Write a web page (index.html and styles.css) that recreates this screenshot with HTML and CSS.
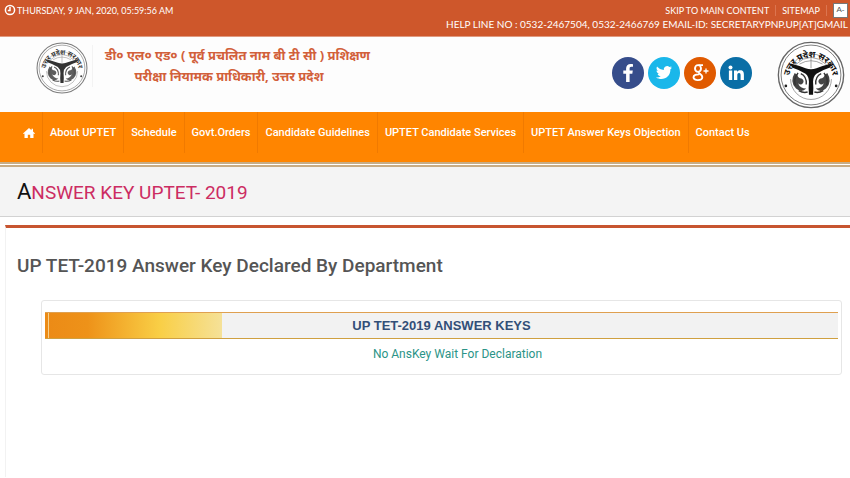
FILE: index.html
```
<!DOCTYPE html>
<html lang="en">
<head>
<meta charset="UTF-8">
<meta name="viewport" content="width=device-width, initial-scale=1.0">
<title>UPTET Answer Key</title>
<link rel="stylesheet" href="styles.css">
</head>
<body>

<!-- shared emblem -->
<svg class="sprite" aria-hidden="true">
    <symbol id="emblem" viewBox="0 0 100 100">
        <circle class="ring" cx="50" cy="50" r="48"/>
        <circle cx="50" cy="50" r="44" fill="none" stroke="#444" stroke-width="1"/>
        <path d="M24 34 A30 30 0 0 1 76 34 M20 56 A30 30 0 0 0 80 56" fill="none" stroke="#777" stroke-width="1"/>
        <path d="M50 20 V40 M27 35 Q50 13 73 35 M33 34 Q50 24 67 34" fill="none" stroke="#777" stroke-width="1"/>
        <path d="M20 33 Q32 36 42 40 Q50 43 58 40 Q68 36 80 33 L78 39 Q66 43 58 48 Q53 52 53 60 Q54 70 53 79 L47 79 Q46 70 47 60 Q47 52 42 48 Q34 43 22 39 Z" fill="#111"/>
        <path d="M26 47 Q18 60 28 70 Q36 77 43 70 Q34 70 31 62 Q35 66 38 62 Q41 58 36 55 Q31 55 30 50 Z" fill="#444"/>
        <path d="M35 48 Q44 52 43 64 M31 47 Q24 55 27 65 M32 73 Q39 77 45 75" fill="none" stroke="#333" stroke-width="2"/>
        <path d="M74 47 Q82 60 72 70 Q64 77 57 70 Q66 70 69 62 Q65 66 62 62 Q59 58 64 55 Q69 55 70 50 Z" fill="#444"/>
        <path d="M65 48 Q56 52 57 64 M69 47 Q76 55 73 65 M68 73 Q61 77 55 75" fill="none" stroke="#333" stroke-width="2"/>
        <circle cx="13" cy="66" r="2" fill="#222"/>
        <circle cx="87" cy="66" r="2" fill="#222"/>
        <path id="arc" d="M18 56 A32 32 0 1 1 82 56" fill="none"/>
        <text class="emblem-text" text-anchor="middle"><textPath href="#arc" startOffset="50%">उत्तर प्रदेश सरकार</textPath></text>
    </symbol>
</svg>

<div class="topbar">
    <div class="topbar-row">
        <span class="clock">
            <svg viewBox="0 0 12 12" aria-hidden="true"><circle cx="6" cy="6" r="4.6"/><path d="M6 3v3.400H3.800"/></svg>
            THURSDAY, 9 JAN, 2020, 05:59:56 AM
        </span>
        <div class="tools">
            <a href="#content">SKIP TO MAIN CONTENT</a>
            <a href="#">SITEMAP</a>
            <button type="button" class="font-size">A-</button>
        </div>
    </div>
    <div class="helpline">HELP LINE NO : 0532-2467504, 0532-2466769 EMAIL-ID: SECRETARYPNP.UP[AT]GMAIL</div>
</div>

<header class="header">
    <svg class="emblem emblem-small" role="img" aria-label="Emblem"><use href="#emblem"/></svg>
    <div class="site-name" lang="hi">
        <div>डी० एल० एड० ( पूर्व प्रचलित नाम बी टी सी ) प्रशिक्षण</div>
        <div>परीक्षा नियामक प्राधिकारी, उत्तर प्रदेश&nbsp;&nbsp;&nbsp;&nbsp;&nbsp;</div>
    </div>
    <div class="social">
        <a class="facebook" href="#" aria-label="Facebook"><svg viewBox="0 0 32 32"><path d="M17.6 25v-8.2h2.7l.5-3.3h-3.2v-2c0-1 .5-1.7 1.8-1.7H21V7.2C20.5 7.1 19.6 7 18.7 7c-2.9 0-4.6 1.7-4.6 4.6v1.9h-2.8v3.3h2.8V25z"/></svg></a>
        <a class="twitter" href="#" aria-label="Twitter"><svg viewBox="0 0 32 32"><path d="M24 10.500c-.6.3-1.200.4-1.900.5.7-.4 1.200-1 1.400-1.800-.6.4-1.300.6-2.100.8a3.300 3.300 0 0 0-5.600 3c-2.700-.1-5.100-1.400-6.800-3.400-.8 1.500-.5 3.400 1 4.400-.5 0-1-.2-1.500-.4 0 1.600 1.100 2.900 2.600 3.200-.5.100-1 .1-1.500.1.400 1.300 1.600 2.200 3.100 2.300A6.600 6.600 0 0 1 7.900 20.500C15 24.500 22.700 20 22.400 12.200c.6-.5 1.200-1 1.600-1.700z"/></svg></a>
        <a class="google" href="#" aria-label="Google Plus"><svg viewBox="0 0 32 32"><g fill="none" stroke="#fff"><g stroke-width="1.9"><ellipse cx="14" cy="11.500" rx="3" ry="3.400"/><path d="M14.500 8.100h4.500M15.300 15c-1.800 1.500 3 2.300 3 4.900 0 4.200-8.800 4.200-8.800.4 0-2.400 3-3 5.700-2.900"/></g><path d="M19.500 14h5M22 11.500v5" stroke-width="1.300"/></g></svg></a>
        <a class="linkedin" href="#" aria-label="LinkedIn"><svg viewBox="0 0 32 32"><circle cx="10.500" cy="10.500" r="2"/><path d="M8.900 13.600h3.300V23H8.900zM14 13.600h3.100v1.300c.5-.9 1.600-1.600 3.100-1.600 3 0 3.700 1.900 3.700 4.600V23h-3.300v-4.600c0-1.200-.1-2.400-1.600-2.400s-1.700 1.200-1.700 2.400V23H14z"/></svg></a>
    </div>
    <svg class="emblem emblem-large" role="img" aria-label="Emblem"><use href="#emblem"/></svg>
</header>

<nav class="nav">
    <a href="#" aria-label="Home"><svg viewBox="0 0 12 10" aria-hidden="true"><path d="M6 0l2.500 2.200V.7h1.500v2.800L12 5.400l-.7.700L10.500 5.400V10H7.200V6.700H4.800V10H1.500V5.400l-.8.700L0 5.400z"/></svg></a>
    <a href="#">About UPTET</a>
    <a href="#">Schedule</a>
    <a href="#">Govt.Orders</a>
    <a href="#">Candidate Guidelines</a>
    <a href="#">UPTET Candidate Services</a>
    <a href="#">UPTET Answer Keys Objection</a>
    <a href="#">Contact Us</a>
</nav>

<div class="page-title">
    <h1>ANSWER KEY UPTET- 2019</h1>
</div>

<main class="content" id="content">
    <h2>UP TET-2019 Answer Key Declared By Department</h2>
    <section class="panel">
        <h3>UP TET-2019 ANSWER KEYS</h3>
        <p>No AnsKey Wait For Declaration</p>
    </section>
</main>

</body>
</html>
```
FILE: styles.css
```
* {
    box-sizing: border-box;
}

body {
    margin: 0;
    background: #fff;
    font-family: Roboto, sans-serif;
}

a {
    color: inherit;
    text-decoration: none;
}

h1, h2, h3, p {
    margin: 0;
}

.sprite {
    display: none;
}

/* top bar */
.topbar {
    height: 37px;
    background: #ce572b;
    border-bottom: 1px solid #e09a80;
    color: #fff;
    font-family: Lato, sans-serif;
    font-size: 9px;
}

.topbar-row {
    display: flex;
    justify-content: space-between;
    height: 18px;
    padding-left: 4px;
}

.clock {
    display: flex;
    align-items: center;
    gap: 1px;
    height: 20px;
}

.clock svg {
    width: 12px;
    height: 12px;
    fill: none;
    stroke: #fff;
    stroke-width: 1.5;
}

.tools {
    display: flex;
    align-items: center;
    height: 20px;
}

.tools a {
    padding: 0 6px;
    border-right: 1px solid #dc7550;
}

.font-size {
    width: 15px;
    height: 15px;
    margin: 0 2px 0 6px;
    padding: 0;
    border: 1px solid #777;
    background: #fff;
    color: #555;
    font-size: 8px;
    line-height: 12px;
}

.helpline {
    padding-right: 2px;
    font-size: 10px;
    line-height: 12px;
    text-align: right;
    white-space: nowrap;
}

/* header */
.header {
    display: flex;
    align-items: flex-start;
    height: 75px;
    padding: 4px 5px 0 36px;
    background: #fdfdfd;
}

.emblem {
    flex: none;
}

.ring {
    fill: #fff;
    stroke: #666;
    stroke-width: 2;
}

.emblem-text {
    fill: #111;
    font-family: "Noto Sans", sans-serif;
    font-size: 13px;
    font-weight: bold;
}

.emblem-small {
    width: 52px;
    height: 54px;
    opacity: 0.85;
}

.emblem-large {
    width: 68px;
    height: 68px;
    margin-left: 25px;
}

.site-name {
    margin: 4px 0 0 4px;
    padding-left: 12px;
    border-left: 1px solid #f3f3f3;
    color: #d2603a;
    font-family: "Noto Sans", "Noto Sans Devanagari", sans-serif;
    font-size: 13px;
    font-weight: bold;
    line-height: 21px;
    text-align: center;
}

.social {
    display: flex;
    gap: 4px;
    margin: 16px 0 0 auto;
}

.social a {
    width: 32px;
    height: 32px;
    border-radius: 50%;
}

.social svg {
    display: block;
    fill: #fff;
}

.facebook { background: #364d8b; }
.twitter { background: #1ab7ea; }
.google { background: #e05a00; }
.linkedin { background: #0a6ea6; }

/* menu */
.nav {
    display: flex;
    align-items: flex-start;
    height: 55px;
    padding-left: 16px;
    background: #ff8500;
    background-clip: padding-box;
    border-bottom: 5px double #c8ac84;
    color: #fff;
    font-size: 11px;
    font-weight: 500;
}

.nav a {
    padding: 0 7px;
    border-right: 1px solid #f07a00;
    line-height: 41px;
    white-space: nowrap;
}

.nav a:last-child {
    border-right: 0;
}

.nav svg {
    width: 12px;
    height: 10px;
    fill: #fff;
    vertical-align: middle;
}

/* page title */
.page-title {
    height: 50px;
    padding-left: 17px;
    background: #f4f4f4;
    border-bottom: 1px solid #d2d2d2;
}

.page-title h1 {
    color: #cc2c62;
    font-size: 19px;
    font-weight: 400;
    line-height: 50px;
}

.page-title h1::first-letter {
    color: #111;
    font-size: 22px;
}

/* content */
.content {
    margin: 8px 0 0 5px;
    padding: 24px 8px 0 11px;
    border-top: 3px solid #c75530;
    border-left: 1px solid #f2f2f2;
    min-height: 252px;
}

.content h2 {
    color: #555;
    font-size: 19px;
    font-weight: 500;
    line-height: 28px;
}

.panel {
    margin: 20px 0 0 24px;
    padding: 11px 3px 5px;
    border: 1px solid #e6e6e6;
    border-radius: 3px;
    text-align: center;
}

.panel h3 {
    border-top: 1px solid #dfa050;
    border-bottom: 1px solid #cfa040;
    background: linear-gradient(to right, #ec8b16 3px, #f8d08a 3px, #f8d08a 4px, #ec8b16 4px, #ee9219 24%, #f9cf46 65%, #f5e198) left / 177px 100% no-repeat #f2f2f2;
    color: #324f78;
    font-family: "Liberation Sans", Arial, sans-serif;
    font-size: 13px;
    line-height: 25px;
}

.panel p {
    padding-left: 32px;
    color: #2b9487;
    font-size: 12px;
    line-height: 30px;
}
```
